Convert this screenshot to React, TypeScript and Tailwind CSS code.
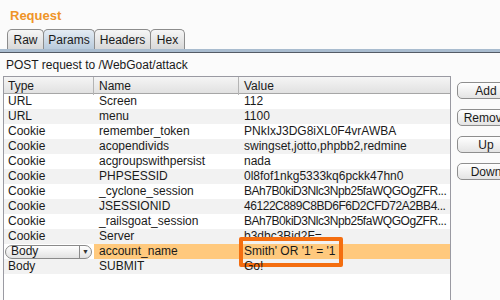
import React from "react";

const ROWS: [string, string, string][] = [
  ["URL", "Screen", "112"],
  ["URL", "menu", "1100"],
  ["Cookie", "remember_token", "PNkIxJ3DG8iXL0F4vrAWBA"],
  ["Cookie", "acopendivids", "swingset,jotto,phpbb2,redmine"],
  ["Cookie", "acgroupswithpersist", "nada"],
  ["Cookie", "PHPSESSID", "0l8fof1nkg5333kq6pckk47hn0"],
  ["Cookie", "_cyclone_session", "BAh7B0kiD3Nlc3Npb25faWQGOgZFR..."],
  ["Cookie", "JSESSIONID", "46122C889C8BD6F6D2CFD72A2BB4..."],
  ["Cookie", "_railsgoat_session", "BAh7B0kiD3Nlc3Npb25faWQGOgZFR..."],
  ["Cookie", "Server", "b3dbc3Bid2F="],
  ["Body", "account_name", "Smith' OR '1' = '1"],
  ["Body", "SUBMIT", "Go!"],
];

const TABS = [
  { label: "Raw", w: "w-[37px]" },
  { label: "Params", w: "w-[52px]", active: true },
  { label: "Headers", w: "w-[57px]" },
  { label: "Hex", w: "w-[35px]" },
];

const BUTTONS = ["Add", "Remove", "Up", "Down"];

export default function App() {
  return (
    <div className="w-[500px] h-[300px] overflow-hidden bg-[#fbfbfb] text-[12px] text-[#1a1a1a] font-['Liberation_Sans',Arial,sans-serif]">
      <div className="pl-[10px] pt-[6px] h-[29px] text-[13px] font-bold text-[#ef9428]">Request</div>

      {/* tabs */}
      <div className="flex pl-[7px] h-[20px]">
        {TABS.map((t) => (
          <div
            key={t.label}
            className={`${t.w} -ml-px first:ml-0 flex items-center justify-center border border-b-0 border-[#8c8c8c] rounded-t-[5px] ${
              t.active
                ? "bg-gradient-to-b from-[#e4ecf4] to-[#b9cbdc] z-10"
                : "bg-gradient-to-b from-[#f6f6f6] to-[#d9d9d9]"
            }`}
          >
            {t.label}
          </div>
        ))}
      </div>
      <div className="h-[4px] bg-[#a9bccf] border-b border-[#545b66]" />

      <div className="h-[23px] pl-[6px] flex items-center">POST request to /WebGoat/attack</div>

      <div className="flex">
        {/* table */}
        <div className="ml-[3px] w-[448px] shrink-0 h-[240px] border border-[#9a9aa2] bg-white">
          <div className="grid grid-cols-[90px_145px_1fr] h-[17px] bg-gradient-to-b from-[#f5f5f5] to-[#e1e1e1] border-b border-[#a6a6a6]">
            <div className="pl-[4px] flex items-center border-r border-[#b4b4b4]">Type</div>
            <div className="pl-[5px] flex items-center border-r border-[#b4b4b4]">Name</div>
            <div className="pl-[5px] flex items-center">Value</div>
          </div>
          {ROWS.map(([type, name, value], i) => {
            const selected = i === 10;
            const bg = selected ? "bg-[#ffc97d]" : i % 2 === 1 ? "bg-[#f2f2f2]" : "bg-white";
            const long = value.endsWith("...");
            return (
              <div key={i} className={`grid grid-cols-[90px_145px_1fr] h-[15px] leading-[15px] ${bg}`}>
                {selected ? (
                  <div className="bg-white flex items-center pl-[1px]">
                    <div className="w-[87px] h-[14px] flex items-stretch border border-[#8a8a8a] rounded-[7px] bg-gradient-to-b from-white to-[#e2e2e2] overflow-hidden">
                      <span className="flex-1 pl-[5px] flex items-center">{type}</span>
                      <span className="w-[12px] border-l border-[#8a8a8a] flex items-center justify-center text-[7px] text-[#333]">▼</span>
                    </div>
                  </div>
                ) : (
                  <div className="pl-[4px]">{type}</div>
                )}
                <div className="pl-[5px]">{name}</div>
                <div className="relative min-w-0">
                  <div className={`pl-[5px] pr-[2px] whitespace-nowrap overflow-hidden ${long ? "tracking-[-0.45px]" : ""}`}>{value}</div>
                  {selected && (
                    <div className="absolute left-0 -top-[7px] w-[104px] h-[30px] border-[4px] border-[#f46e10] rounded-[2px]" />
                  )}
                </div>
              </div>
            );
          })}
        </div>

        {/* buttons */}
        <div className="ml-[6px] pt-[6px] shrink-0 flex flex-col gap-[10px]">
          {BUTTONS.map((b) => (
            <div
              key={b}
              className="w-[58px] h-[17px] shrink-0 flex items-center justify-center border border-[#8e8e8e] rounded-[5px] bg-gradient-to-b from-white to-[#e4e4e4] whitespace-nowrap"
            >
              {b}
            </div>
          ))}
        </div>
      </div>
    </div>
  );
}
